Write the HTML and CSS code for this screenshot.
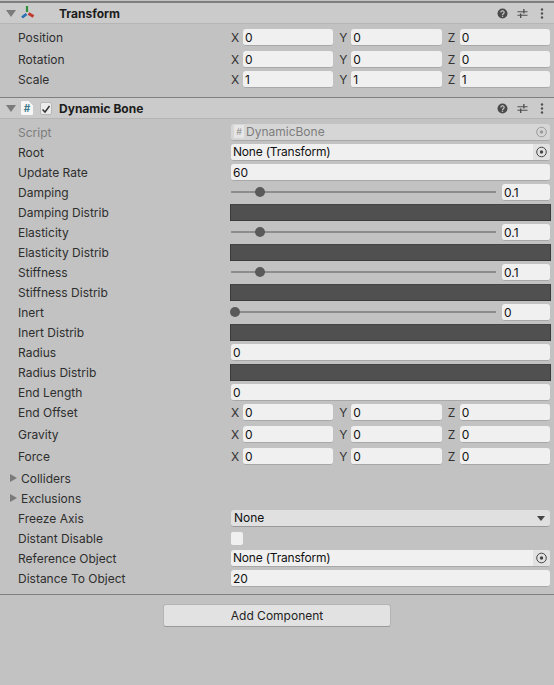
FILE: index.html
```html
<!DOCTYPE html>
<html lang="en">
<head>
<meta charset="UTF-8" />
<title>Inspector</title>
<link rel="stylesheet" href="styles.css">
</head>
<body>

<svg class="defs" width="0" height="0">
  <symbol id="help" viewBox="0 0 12 12">
    <circle cx="6" cy="6" r="5.4" fill="#4a4a4a"/>
    <path d="M4.2 4.8a1.8 1.7 0 1 1 2.8 1.4c-.7.5-1 .7-1 1.4" fill="none" stroke="#c8c8c8" stroke-width="1.3"/>
    <rect x="5.3" y="8.3" width="1.4" height="1.4" fill="#c8c8c8"/>
  </symbol>
  <symbol id="presets" viewBox="0 0 12 12">
    <path d="M.5 4h11M.5 8h11" stroke="#505050" stroke-width="1.1"/>
    <path d="M7.5 1v5M4 6v5" stroke="#505050" stroke-width="1.5"/>
  </symbol>
  <symbol id="menu" viewBox="0 0 4 12">
    <circle cx="2" cy="1.7" r="1.3" fill="#505050"/>
    <circle cx="2" cy="6" r="1.3" fill="#505050"/>
    <circle cx="2" cy="10.3" r="1.3" fill="#505050"/>
  </symbol>
  <symbol id="target" viewBox="0 0 12 12">
    <circle cx="6" cy="6" r="4.8" fill="none" stroke="currentColor" stroke-width="1"/>
    <circle cx="6" cy="6" r="1.7" fill="currentColor"/>
  </symbol>
</svg>

<section class="component first">
  <header class="comp-header">
    <span class="fold"></span>
    <svg class="transform-icon" viewBox="0 0 16 16" width="16" height="16">
      <path d="M7 1v6" stroke="#2f8f3a" stroke-width="2.2"/>
      <path d="M6.5 9l-4.5 3.5" stroke="#2a6fb0" stroke-width="2.8"/>
      <path d="M8.5 8.5l5 3" stroke="#c0392b" stroke-width="3"/>
    </svg>
    <span class="comp-title transform-title">Transform</span>
    <span class="comp-tools">
      <svg class="tool"><use href="#help"/></svg>
      <svg class="tool"><use href="#presets"/></svg>
      <svg class="tool-menu"><use href="#menu"/></svg>
    </span>
  </header>
  <div class="comp-body">
    <div class="row vec"><label>Position</label><div class="vec3"><span>X</span><i class="field">0</i><span>Y</span><i class="field">0</i><span>Z</span><i class="field">0</i></div></div>
    <div class="row"><label>Rotation</label><div class="vec3"><span>X</span><i class="field">0</i><span>Y</span><i class="field">0</i><span>Z</span><i class="field">0</i></div></div>
    <div class="row"><label>Scale</label><div class="vec3"><span>X</span><i class="field">1</i><span>Y</span><i class="field">1</i><span>Z</span><i class="field">1</i></div></div>
  </div>
</section>

<section class="component">
  <header class="comp-header">
    <span class="fold"></span>
    <span class="script-icon">#</span>
    <span class="check on">
      <svg viewBox="0 0 12 12" width="12" height="12"><path d="M2.5 6.5l2.5 2.5 4.5-6" fill="none" stroke="#333" stroke-width="1.5"/></svg>
    </span>
    <span class="comp-title">Dynamic Bone</span>
    <span class="comp-tools">
      <svg class="tool"><use href="#help"/></svg>
      <svg class="tool"><use href="#presets"/></svg>
      <svg class="tool-menu"><use href="#menu"/></svg>
    </span>
  </header>
  <div class="comp-body bone-body">
    <div class="row disabled"><label>Script</label><div class="field object"><span class="mini-script">#</span><span class="object-name">DynamicBone</span><svg class="pick"><use href="#target"/></svg></div></div>
    <div class="row"><label>Root</label><div class="field object"><span class="object-name">None (Transform)</span><svg class="pick"><use href="#target"/></svg></div></div>
    <div class="row"><label>Update Rate</label><div class="field">60</div></div>
    <div class="row"><label>Damping</label><div class="slider"><div class="track"><b class="thumb thumb-tenth"></b></div><i class="field num">0.1</i></div></div>
    <div class="row"><label>Damping Distrib</label><div class="curve"></div></div>
    <div class="row"><label>Elasticity</label><div class="slider"><div class="track"><b class="thumb thumb-tenth"></b></div><i class="field num">0.1</i></div></div>
    <div class="row"><label>Elasticity Distrib</label><div class="curve"></div></div>
    <div class="row"><label>Stiffness</label><div class="slider"><div class="track"><b class="thumb thumb-tenth"></b></div><i class="field num">0.1</i></div></div>
    <div class="row"><label>Stiffness Distrib</label><div class="curve"></div></div>
    <div class="row"><label>Inert</label><div class="slider"><div class="track"><b class="thumb"></b></div><i class="field num">0</i></div></div>
    <div class="row"><label>Inert Distrib</label><div class="curve"></div></div>
    <div class="row"><label>Radius</label><div class="field">0</div></div>
    <div class="row"><label>Radius Distrib</label><div class="curve"></div></div>
    <div class="row"><label>End Length</label><div class="field">0</div></div>
    <div class="row vec"><label>End Offset</label><div class="vec3"><span>X</span><i class="field">0</i><span>Y</span><i class="field">0</i><span>Z</span><i class="field">0</i></div></div>
    <div class="row vec"><label>Gravity</label><div class="vec3"><span>X</span><i class="field">0</i><span>Y</span><i class="field">0</i><span>Z</span><i class="field">0</i></div></div>
    <div class="row vec"><label>Force</label><div class="vec3"><span>X</span><i class="field">0</i><span>Y</span><i class="field">0</i><span>Z</span><i class="field">0</i></div></div>
    <div class="row foldout"><span class="fold-right"></span><label>Colliders</label></div>
    <div class="row foldout"><span class="fold-right"></span><label>Exclusions</label></div>
    <div class="row"><label>Freeze Axis</label><div class="dropdown">None<span class="caret"></span></div></div>
    <div class="row"><label>Distant Disable</label><span class="check"></span></div>
    <div class="row"><label>Reference Object</label><div class="field object"><span class="object-name">None (Transform)</span><svg class="pick"><use href="#target"/></svg></div></div>
    <div class="row"><label>Distance To Object</label><div class="field">20</div></div>
  </div>
</section>

<div class="add-wrap">
  <button class="add-btn">Add Component</button>
</div>

</body>
</html>
```

FILE: styles.css
```css
body {
  margin: 0;
  padding-top: 1px;
  height: 684px;
  overflow: hidden;
  font-family: Inter, Roboto, 'Liberation Sans', sans-serif;
  font-size: 12px;
  color: #222;
  background: #c2c2c2;
}
.defs {
  position: absolute;
}
.component {
  border-top: 1px solid #7f7f7f;
}
.component.first {
  border-top: 2px solid #7f7f7f;
}
.comp-header {
  display: flex;
  align-items: center;
  height: 20px;
  background: #cbcbcb;
  border-bottom: 1px solid #b5b5b5;
}
.fold {
  width: 0;
  height: 0;
  margin: 1px 0 0 6px;
  border-left: 5px solid transparent;
  border-right: 5px solid transparent;
  border-top: 7px solid #7b7b7b;
}
.transform-icon {
  margin-left: 4px;
}
.comp-title {
  margin-left: 7px;
  font-weight: 700;
  color: #1c1c1c;
}
.transform-title {
  margin-left: 23px;
}
.script-icon {
  width: 12px;
  height: 14px;
  margin-left: 5px;
  background: linear-gradient(225deg, #cbcbcb 3px, #f6f6f6 3px);
  border-radius: 1px;
  color: #3f7c8c;
  font-size: 10px;
  font-weight: 700;
  line-height: 15px;
  text-align: center;
}
.comp-tools {
  display: flex;
  align-items: center;
  margin-left: auto;
  margin-right: 10px;
  gap: 9px;
}
.tool {
  width: 11px;
  height: 11px;
}
.tool-menu {
  width: 4px;
  height: 11px;
  margin-left: 3px;
}
.comp-body {
  padding: 3px 0 8px;
}
.bone-body {
  padding: 3px 0 6px;
  border-bottom: 1px solid #7f7f7f;
}
.row {
  display: flex;
  align-items: center;
  height: 20px;
  padding: 0 4px 0 18px;
}
.row.vec {
  margin-bottom: 2px;
}
.row label {
  width: 213px;
  flex: none;
  color: #2e2e2e;
}
.row.disabled label {
  color: #7d7d7d;
}
.field {
  flex: 1;
  display: block;
  box-sizing: border-box;
  height: 17px;
  padding: 0 2px;
  background: #f0f0f0;
  border-radius: 3px;
  border-bottom: 1px solid #a8a8a8;
  font-style: normal;
  line-height: 18px;
  color: #111;
}
.vec3 {
  flex: 1;
  display: flex;
  align-items: center;
}
.vec3 span {
  width: 12px;
  flex: none;
  color: #333;
}
.vec3 .field {
  margin-right: 6px;
}
.vec3 .field:last-child {
  margin-right: 0;
}
.object {
  display: flex;
  align-items: center;
  padding-right: 0;
}
.object-name {
  flex: 1;
  letter-spacing: -0.2px;
}
.pick {
  width: 17px;
  height: 16px;
  padding: 2px 2.5px;
  box-sizing: border-box;
  color: #444;
  background: #e2e2e2;
  border-radius: 0 3px 3px 0;
}
.disabled .field {
  background: #d6d6d6;
  color: #7d7d7d;
}
.disabled .object-name {
  letter-spacing: 0;
}
.disabled .pick {
  color: #999;
  background: none;
}
.mini-script {
  width: 10px;
  margin: 0 2px 0 1px;
  background: #e6e6e6;
  color: #999;
  font-size: 9px;
  line-height: 13px;
  text-align: center;
}
.slider {
  flex: 1;
  display: flex;
  align-items: center;
  gap: 6px;
}
.track {
  flex: 1;
  position: relative;
  height: 2px;
  background: #8c8c8c;
}
.thumb {
  position: absolute;
  left: -1px;
  top: -4px;
  width: 10px;
  height: 10px;
  background: #5a5a5a;
  border-radius: 50%;
}
.thumb-tenth {
  left: 24px;
}
.slider .num {
  flex: none;
  width: 48px;
}
.curve {
  flex: 1;
  box-sizing: border-box;
  height: 17px;
  margin: 0 -1px;
  background: #505050;
  border: 1px solid #3a3a3a;
  border-top-color: #444;
}
.foldout {
  padding-left: 10px;
}
.fold-right {
  width: 0;
  height: 0;
  margin-right: 4px;
  border-top: 4px solid transparent;
  border-bottom: 4px solid transparent;
  border-left: 7px solid #7b7b7b;
}
.dropdown {
  flex: 1;
  position: relative;
  box-sizing: border-box;
  height: 17px;
  padding: 0 3px;
  background: #e0e0e0;
  border-radius: 3px;
  border-bottom: 1px solid #9a9a9a;
  line-height: 15px;
  color: #111;
}
.caret {
  position: absolute;
  right: 5px;
  top: 6px;
  border-left: 4px solid transparent;
  border-right: 4px solid transparent;
  border-top: 5px solid #444;
}
.check {
  display: block;
  box-sizing: border-box;
  width: 12px;
  height: 13px;
  background: #f0f0f0;
  border-radius: 2px;
}
.comp-header .check {
  margin-left: 7px;
  background: #ececec;
  border: 1px solid #b8b8b8;
}
.check svg {
  display: block;
  margin-left: -1px;
}
.add-wrap {
  display: flex;
  justify-content: center;
  padding-top: 9px;
}
.add-btn {
  width: 228px;
  height: 23px;
  padding: 0;
  font: inherit;
  color: #222;
  background: #e2e2e2;
  border: 1px solid #b4b4b4;
  border-bottom-color: #999;
  border-radius: 3px;
}
```
